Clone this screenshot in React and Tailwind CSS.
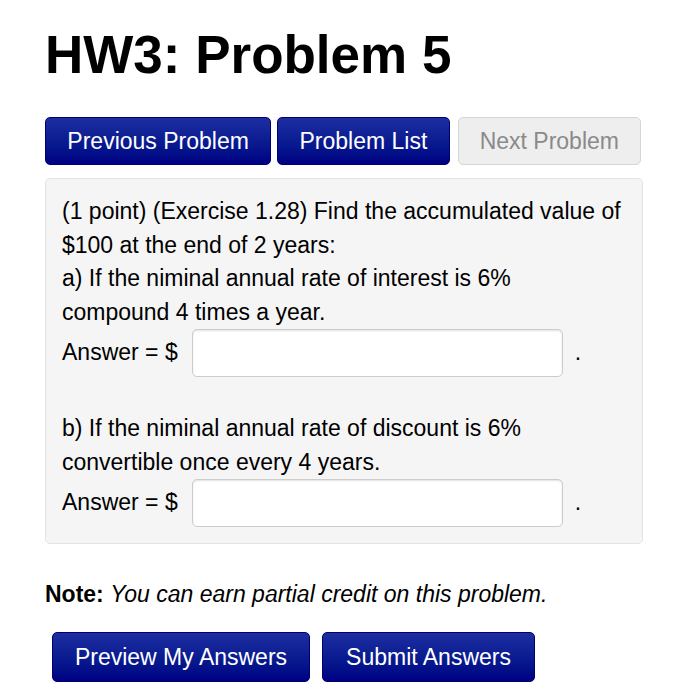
import React from 'react';

const blueBtn =
  'rounded-[5px] border border-[#00006e] bg-gradient-to-b from-[#1c2ea0] to-[#000082] text-white text-[23px] leading-none';

function AnswerRow() {
  return (
    <div className="flex items-center h-[48px]">
      <span>Answer = $</span>
      <input
        type="text"
        className="ml-[14px] w-[371px] h-[48px] rounded-[5px] border border-[#cccccc] bg-white shadow-[inset_0_1px_2px_rgba(0,0,0,0.12)] outline-none"
      />
      <span className="ml-[12px]">.</span>
    </div>
  );
}

export default function App() {
  return (
    <div className="bg-white min-h-[700px] px-[45px] text-black" style={{ fontFamily: '"Liberation Sans", Arial, sans-serif' }}>
      <h1 className="pt-[22px] text-[53px] font-bold leading-[66px]">HW3: Problem 5</h1>

      <div className="mt-[29px] flex gap-[6px]">
        <button className={`${blueBtn} h-[48px] w-[227px]`}>Previous Problem</button>
        <button className={`${blueBtn} h-[48px] w-[173px]`}>Problem List</button>
        <button className="ml-[2px] h-[48px] w-[184px] rounded-[5px] border border-[#d6d6d6] bg-[#eeeeee] text-[23px] leading-none text-[#8a8a8a]">
          Next Problem
        </button>
      </div>

      <div className="mt-[13px] w-[598px] rounded-[5px] border border-[#e3e3e3] bg-[#f5f5f5] px-[16px] pt-[16px] pb-[16px] text-[23px] leading-[33.5px]">
        <div>
          (1 point) (Exercise 1.28) Find the accumulated value of
          <br />
          $100 at the end of 2 years:
        </div>
        <div>
          a) If the niminal annual rate of interest is 6%
          <br />
          compound 4 times a year.
        </div>
        <AnswerRow />
        <div className="h-[35px]" />
        <div>
          b) If the niminal annual rate of discount is 6%
          <br />
          convertible once every 4 years.
        </div>
        <AnswerRow />
      </div>

      <p className="mt-[34px] text-[23px] leading-[33px]">
        <b>Note:</b> <i>You can earn partial credit on this problem.</i>
      </p>

      <div className="mt-[21px] ml-[7px] flex gap-[12px]">
        <button className={`${blueBtn} h-[50px] w-[258px]`}>Preview My Answers</button>
        <button className={`${blueBtn} h-[50px] w-[213px]`}>Submit Answers</button>
      </div>
    </div>
  );
}
